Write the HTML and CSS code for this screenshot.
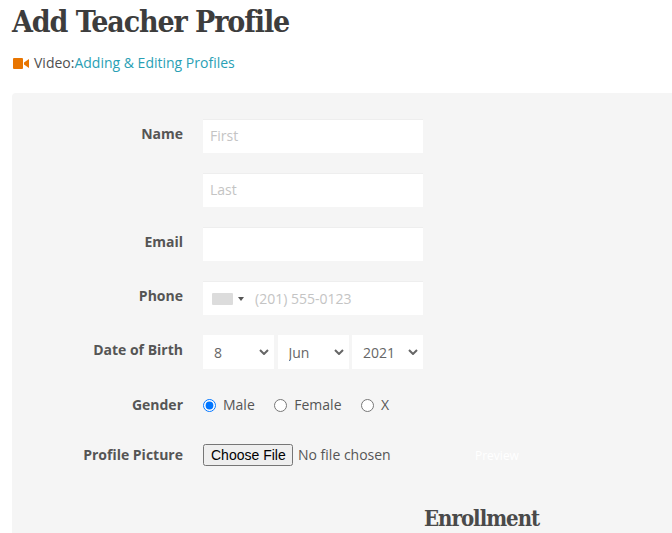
FILE: index.html
```html
<!DOCTYPE html>
<html lang="en">
<head>
    <meta charset="UTF-8">
    <title>Add Teacher Profile</title>
    <link rel="stylesheet" href="styles.css">
</head>
<body>
    <h1 class="page-title">Add Teacher Profile</h1>
    <p class="video-line">
        <svg class="video-icon" width="16" height="11" viewBox="0 0 16 11"><rect x="0" y="0" width="10" height="11" rx="1" fill="#e87500"/><path d="M11 4.5 L16 1 V10 L11 6.5 Z" fill="#e87500"/></svg>
        <span>Video:<a href="#">Adding &amp; Editing Profiles</a></span>
    </p>
    <form class="panel">
        <div class="row">
            <label class="row-label">Name</label>
            <input class="field" type="text" placeholder="First">
        </div>
        <div class="row">
            <span class="row-label"></span>
            <input class="field" type="text" placeholder="Last">
        </div>
        <div class="row">
            <label class="row-label">Email</label>
            <input class="field" type="text">
        </div>
        <div class="row">
            <label class="row-label">Phone</label>
            <div class="phone">
                <span class="flag"></span>
                <span class="flag-arrow"></span>
                <input class="phone-input" type="text" placeholder="(201) 555-0123">
            </div>
        </div>
        <div class="row">
            <label class="row-label">Date of Birth</label>
            <div class="dob">
                <select class="pick"><option>8</option></select>
                <select class="pick"><option>Jun</option></select>
                <select class="pick"><option>2021</option></select>
            </div>
        </div>
        <div class="row row-short">
            <label class="row-label">Gender</label>
            <div class="radios">
                <label class="radio"><input type="radio" name="gender" checked> Male</label>
                <label class="radio"><input type="radio" name="gender"> Female</label>
                <label class="radio"><input type="radio" name="gender"> X</label>
            </div>
        </div>
        <div class="row row-file">
            <label class="row-label">Profile Picture</label>
            <input class="file" type="file">
            <span class="preview">Preview</span>
        </div>
        <h2 class="section-title">Enrollment</h2>
    </form>
</body>
</html>
```

FILE: styles.css
```css
html, body {
    height: 533px;
    overflow: hidden;
}

body {
    margin: 0;
    padding: 0 0 0 12px;
    font-family: "Open Sans", sans-serif;
    font-size: 14px;
    color: #555;
    background-color: #fff;
}

.page-title {
    margin: 0;
    padding-top: 3px;
    font-family: "DejaVu Serif Condensed", "DejaVu Serif", serif;
    font-size: 30px;
    line-height: 38px;
    font-weight: 700;
    color: #3d3d3d;
    letter-spacing: -1.1px;
}

.video-line {
    display: flex;
    align-items: center;
    gap: 5px;
    margin: 12px 0 0 1px;
    line-height: 20px;
    color: #4f4f4f;
}

.video-line a {
    color: #2a9fb5;
    text-decoration: none;
}

.panel {
    margin-top: 20px;
    padding-top: 26px;
    height: 440px;
    background-color: #f5f5f5;
    border-radius: 4px 0 0 0;
}

.row {
    display: flex;
    align-items: flex-start;
    height: 34px;
    margin-bottom: 20px;
}

.row-short {
    height: 30px;
    margin-bottom: 23px;
}

.row-short .row-label,
.radios {
    line-height: 32px;
}

.row-file {
    align-items: center;
    height: 26px;
    margin-bottom: 0;
}

.row-label {
    flex: none;
    width: 171px;
    margin-right: 20px;
    text-align: right;
    font-weight: 700;
    line-height: 30px;
    color: #555;
}

.row-file .row-label {
    line-height: 26px;
}

.field {
    box-sizing: border-box;
    width: 220px;
    height: 34px;
    padding: 0 7px 2px;
    border: 0;
    border-top: 1px solid #eee;
    background-color: #fff;
    font-family: inherit;
    font-size: 14px;
    color: #555;
}

::placeholder {
    color: #c4c4c4;
    opacity: 1;
}

.phone {
    box-sizing: border-box;
    display: flex;
    align-items: center;
    width: 220px;
    height: 34px;
    padding-left: 9px;
    border-top: 1px solid #eee;
    background-color: #fff;
}

.flag {
    width: 21px;
    height: 12px;
    border-radius: 1px;
    background-color: #dcdcdc;
}

.flag-arrow {
    width: 0;
    height: 0;
    margin-left: 5px;
    border-left: 3px solid transparent;
    border-right: 3px solid transparent;
    border-top: 4px solid #555;
}

.phone-input {
    flex: 1;
    min-width: 0;
    margin-left: 11px;
    padding: 0;
    border: 0;
    background: transparent;
    font-family: inherit;
    font-size: 14px;
}

.dob {
    display: grid;
    grid-template-columns: repeat(3, 1fr);
    gap: 3.5px;
    width: 220px;
}

.pick {
    appearance: none;
    width: 100%;
    height: 34px;
    padding-left: 11px;
    border: 0;
    border-radius: 0;
    background: #fff url("data:image/svg+xml,%3Csvg xmlns='http://www.w3.org/2000/svg' width='10' height='6' viewBox='0 0 10 6'%3E%3Cpath d='M1 1l4 4 4-4' fill='none' stroke='%23666' stroke-width='2'/%3E%3C/svg%3E") no-repeat right 5px center;
    font-family: inherit;
    font-size: 14px;
    color: #666;
}

.radios {
    display: flex;
    gap: 19.5px;
}

.radio {
    display: flex;
    align-items: center;
    gap: 7px;
}

.radio input {
    width: 13px;
    height: 13px;
    margin: 0;
}

.file {
    width: 272px;
    font-family: inherit;
    font-size: 14px;
    color: #555;
}

.file::file-selector-button {
    width: 90px;
    margin-right: 5px;
    font-family: "Liberation Sans", sans-serif;
    font-size: 14px;
}

.preview {
    font-size: 12px;
    color: #fff;
}

.section-title {
    margin: 36px 0 0 412px;
    font-family: "DejaVu Serif Condensed", "DejaVu Serif", serif;
    font-size: 22px;
    line-height: 28px;
    font-weight: 700;
    color: #4a4a4a;
    letter-spacing: -1px;
}
```
